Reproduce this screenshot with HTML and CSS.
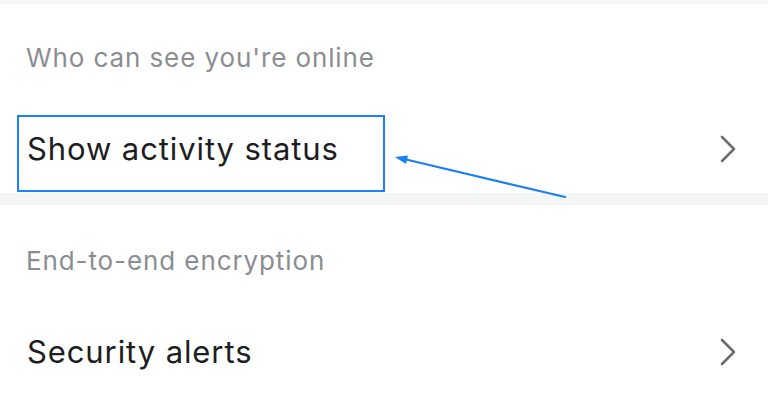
FILE: index.html
```html
<!DOCTYPE html>
<html lang="en">
<head>
    <meta charset="UTF-8">
    <meta name="viewport" content="width=device-width, initial-scale=1.0">
    <title>Privacy settings</title>
    <link rel="stylesheet" href="styles.css">
</head>
<body>

    <div class="top-strip"></div>

    <div class="settings-section">
        <div class="section-title">Who can see you're online</div>
        <div class="settings-row">
            <div class="row-label highlighted">Show activity status</div>
            <svg class="chevron" width="18" height="30" viewBox="0 0 18 30">
                <polyline points="3,3 15,15 3,27" fill="none" stroke="#6b6e72" stroke-width="2.6" stroke-linecap="round" stroke-linejoin="round"/>
            </svg>
        </div>
    </div>

    <div class="section-gap"></div>

    <div class="settings-section">
        <div class="section-title">End-to-end encryption</div>
        <div class="settings-row">
            <div class="row-label">Security alerts</div>
            <svg class="chevron" width="18" height="30" viewBox="0 0 18 30">
                <polyline points="3,3 15,15 3,27" fill="none" stroke="#6b6e72" stroke-width="2.6" stroke-linecap="round" stroke-linejoin="round"/>
            </svg>
        </div>
    </div>

    <!-- annotation arrow pointing at the highlighted row -->
    <svg class="annotation" width="768" height="412" viewBox="0 0 768 412">
        <line x1="565" y1="197" x2="404" y2="159" stroke="#1a7ff7" stroke-width="2.2" stroke-linecap="round"/>
        <polygon points="395,157 406,164 408,155.5" fill="#1a7ff7"/>
    </svg>

</body>
</html>
```

FILE: styles.css
```css
body {
    margin: 0;
    background-color: #fff;
    font-family: Inter, "Noto Sans", sans-serif;
    width: 768px;
    height: 412px;
    overflow: hidden;
    position: relative;
}
.top-strip {
    height: 4px;
    background-color: #f7f7f7;
}
.settings-section {
    background-color: #fff;
    padding-top: 39px;
    padding-bottom: 1px;
}
.settings-section + .section-gap + .settings-section {
    padding-top: 41px;
}
.section-title {
    font-size: 26px;
    line-height: 30px;
    letter-spacing: 0.9px;
    color: #8a8d91;
    padding-left: 26px;
    margin-bottom: 42px;
}
.settings-row {
    display: flex;
    justify-content: space-between;
    align-items: flex-start;
    padding-left: 17px;
    padding-right: 31px;
}
.row-label {
    width: 368px;
    box-sizing: border-box;
    border: 2px solid transparent;
    padding: 14px 8px 23px 8px;
    font-size: 31px;
    line-height: 36px;
    letter-spacing: 0.9px;
    color: #1c1e21;
}
.row-label.highlighted {
    border-color: #1a82ff;
}
.chevron {
    margin-top: 19px;
}
.section-gap {
    height: 12px;
    background-color: #f4f6f5;
}
.annotation {
    position: absolute;
    left: 0;
    top: 0;
    pointer-events: none;
}
```
